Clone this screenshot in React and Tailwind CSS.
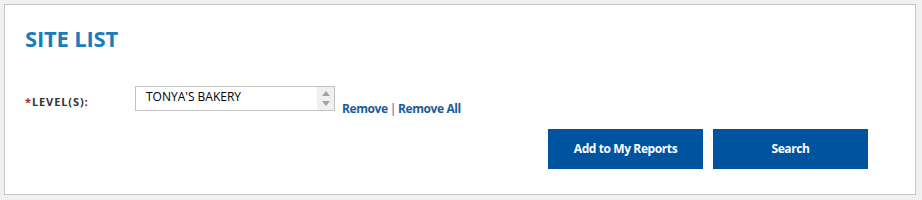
export default function App() {
  const font = { fontFamily: '"Open Sans", "Liberation Sans", sans-serif' };
  return (
    <div className="w-[922px] h-[200px] bg-[#f2f1f1] pt-1 px-1" style={font}>
      <div className="w-[912px] h-[191px] bg-white border border-[#c9c5c5] pl-[20px] pt-[18px]">
        <h1 className="text-[22px] leading-[30px] font-bold text-[#1a7cbd] tracking-[-0.2px]">SITE LIST</h1>
        <div className="flex items-start h-[25px] mt-[33px]">
          <div className="w-[110px] mt-[9px] text-[11px] leading-[14px] font-bold tracking-[0.9px] text-[#333]">
            <span className="text-[#a3262a]">*</span>LEVEL(S):
          </div>
          <div className="w-[200px] h-[25px] border border-[#c3c3c3] flex">
            <div className="flex-1 pl-[10px] pt-[3px] text-[12px] leading-[14px] text-black">TONYA'S BAKERY</div>
            <div className="w-[17px] h-full bg-[#f0f0f0] flex flex-col items-center justify-between py-[4px]">
              <svg width="8" height="5" viewBox="0 0 8 5"><path d="M0 5 L4 0 L8 5 Z" fill="#a3a3a3" /></svg>
              <svg width="8" height="5" viewBox="0 0 8 5"><path d="M0 0 L8 0 L4 5 Z" fill="#a3a3a3" /></svg>
            </div>
          </div>
          <div className="ml-[7px] mt-[16px] text-[12px] leading-[14px] font-bold tracking-[-0.4px] text-[#1b5a9b]">
            <span>Remove</span>
            <span className="font-normal mx-[2px]">|</span>
            <span>Remove All</span>
          </div>
        </div>
        <div className="flex justify-end gap-[10px] mr-[47px] mt-[18px]">
          <button className="w-[155px] h-[40px] bg-[#00539f] text-white text-[12px] font-bold tracking-[-0.4px]">Add to My Reports</button>
          <button className="w-[155px] h-[40px] bg-[#00539f] text-white text-[12px] font-bold tracking-[-0.4px]">Search</button>
        </div>
      </div>
    </div>
  );
}
